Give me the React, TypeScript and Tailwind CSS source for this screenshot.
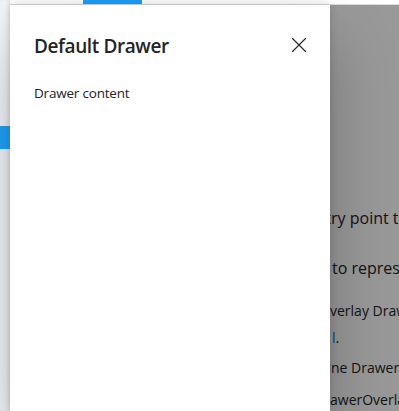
import React from 'react';

const App: React.FC = () => {
  const font = { fontFamily: '"Open Sans", "Noto Sans", sans-serif' };

  return (
    <div className="relative w-[399px] h-[411px] overflow-hidden bg-white text-[#242424]" style={font}>
      <div className="flex h-full">
        {/* left nav rail */}
        <div className="w-[10px] shrink-0 bg-[#f3f7fb] shadow-[inset_-2px_0_3px_rgba(0,0,0,0.06)] pt-[126px]">
          <div className="h-[23px] bg-[#21a4fc]" />
        </div>

        {/* page */}
        <div className="flex-1 min-w-0 flex flex-col">
          <div className="relative h-[5px] border-b border-[#dcdcdc] shrink-0">
            <div className="absolute left-[73px] top-0 w-[59px] h-[4px] bg-[#1ea2fb]" />
          </div>

          <div className="flex flex-col whitespace-nowrap">
            <div className="flex text-[16px] mt-[201px]">
              <span className="w-[321px] shrink-0 flex justify-end overflow-hidden">The Drawer gives users a quick ent</span>
              <span>ry point to configuration and information</span>
            </div>
            <div className="flex text-[16px] mt-[26px]">
              <span className="w-[322px] shrink-0 flex justify-end overflow-hidden">There are two main components&nbsp;</span>
              <span>to represent the Drawer</span>
            </div>
            <div className="flex text-[14px] mt-[20px]">
              <span className="w-[320px] shrink-0 flex justify-end overflow-hidden">OverlayDrawer: An o</span>
              <span>verlay Drawer that is rendered</span>
            </div>
            <div className="flex text-[14px] mt-[6px]">
              <span className="w-[322px] shrink-0 flex justify-end overflow-hidden">on top of the page, see the Dialog&nbsp;&nbsp;</span>
              <span className="text-[#0f6cbd]">l</span>
              <span>.</span>
            </div>
            <div className="flex text-[14px] mt-[9px]">
              <span className="w-[321px] shrink-0 flex justify-end overflow-hidden">InlineDrawer: An inli</span>
              <span>ne Drawer that is rendered inline</span>
            </div>
            <div className="flex text-[14px] mt-[11px]">
              <span className="w-[320px] shrink-0 flex justify-end overflow-hidden">DrawerHeader, DrawerBody, Dr</span>
              <span>awerOverlay</span>
            </div>
          </div>
        </div>
      </div>

      {/* overlay */}
      <div className="absolute left-[10px] right-0 top-[5px] bottom-0 bg-black/40" />

      {/* drawer */}
      <div className="absolute left-[10px] top-[5px] bottom-0 w-[320px] bg-white shadow-[0_0_8px_rgba(0,0,0,0.14),0_32px_64px_rgba(0,0,0,0.24)] flex flex-col">
        <div className="flex items-start justify-between pl-[24px] pr-[15px] pt-[27px]">
          <h2 className="text-[19px] leading-[28px] font-semibold tracking-[-0.4px]">Default Drawer</h2>
          <button className="w-[32px] h-[32px] -mt-[3px] flex items-center justify-center text-[#242424]" aria-label="Close">
            <svg width="20" height="20" viewBox="0 0 20 20" fill="none">
              <path d="M3.5 3.5 16.5 16.5M16.5 3.5 3.5 16.5" stroke="currentColor" strokeWidth="1.1" strokeLinecap="round" />
            </svg>
          </button>
        </div>
        <div className="px-[24px] pt-[22px] text-[13.5px] leading-[20px] tracking-[-0.2px]">Drawer content</div>
      </div>
    </div>
  );
};

export default App;
